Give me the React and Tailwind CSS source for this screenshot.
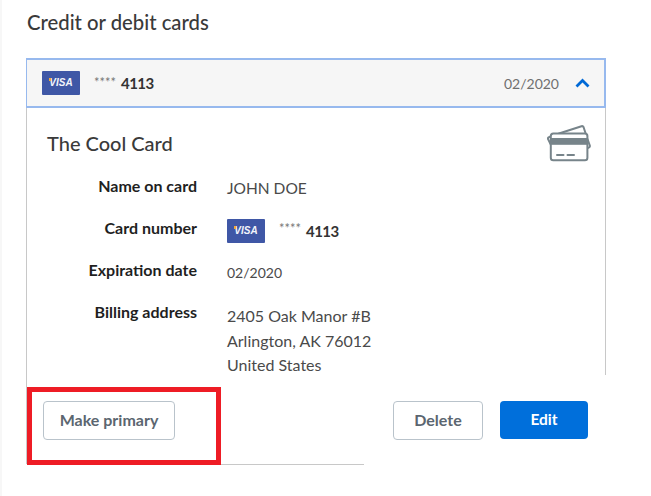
import React from 'react'

const font = { fontFamily: 'Lato, "Noto Sans", sans-serif' }

function VisaBadge() {
    return (
        <div className="w-[38px] h-[24px] shrink-0 rounded-[1px] bg-[#3f57a6] flex items-center justify-center">
            <span className="relative text-[10px] leading-none font-bold italic text-[#f2f4fa] font-['Liberation_Sans',sans-serif]">
                VISA
                <span className="absolute left-0 top-0 w-[2px] h-[3px] bg-[#f0a93a]" />
            </span>
        </div>
    )
}

function CardsIcon() {
    return (
        <svg width="44" height="37" viewBox="0 0 44 37" fill="none" stroke="#77848a" strokeWidth="2" strokeLinejoin="round" strokeLinecap="round">
            <path d="M12 8.5 L34.5 1.2 Q36 0.8 36.6 2.2 L38.5 8" />
            <path d="M4.5 11 L1.6 12.4 Q0.6 13 1.2 14.4 L4 20" />
            <path d="M40.5 14 L42.8 20.5 Q43.2 22 41.8 22.6 L40.5 23.2" />
            <rect x="3.8" y="8.6" width="36.6" height="26.6" rx="2.5" fill="#fff" />
            <rect x="3.8" y="13" width="36.6" height="6.8" fill="#77848a" stroke="none" />
            <path d="M10 30 H16.5 M20.5 30 H27" />
        </svg>
    )
}

function Row({ label, children, className }) {
    return (
        <div className={`flex ${className}`}>
            <div className="w-[170px] shrink-0 text-right text-[16px] leading-[18px] font-bold text-[#1f1f1f]">{label}</div>
            <div className="ml-[30px] text-[15.5px] text-[#4a4a4a]">{children}</div>
        </div>
    )
}

export default function App() {
    return (
        <div className="w-[651px] h-[496px] bg-white flex overflow-hidden relative" style={font}>
            <div className="w-[2px] bg-[#f7f7f7] shrink-0" />
            <div className="ml-[24px] w-[580px] flex flex-col">
                <h2 className="mt-[10px] h-[24px] ml-[1px] leading-[24px] text-[20.3px] font-medium text-[#3a3a3a]">Credit or debit cards</h2>

                <div className="mt-[24px] h-[50px] bg-[#f6f6f6] border-2 border-[#97b9ee] border-l-[1px] flex items-center pl-[15px] pr-[14px]">
                    <VisaBadge />
                    <div className="ml-[14px] flex items-baseline">
                        <span className="text-[13px] text-[#777] relative -top-[2px]">****</span>
                        <span className="ml-[5px] text-[15px] tracking-[-0.6px] font-bold text-[#333]">4113</span>
                    </div>
                    <span className="ml-auto text-[14px] text-[#6f6f6f]">02/2020</span>
                    <svg className="ml-[16px]" width="15" height="10" viewBox="0 0 15 10" fill="none" stroke="#0069d6" strokeWidth="2.8">
                        <path d="M1.5 8.5 L7.5 2.5 L13.5 8.5" />
                    </svg>
                </div>

                <div className="h-[267px] border-x border-[#c8c8c8] relative">
                    <h3 className="mt-[21px] ml-[20px] h-[28px] leading-[28px] text-[20px] font-medium text-[#3a3a3a]">The Cool Card</h3>
                    <div className="absolute right-[14px] top-[17px]">
                        <CardsIcon />
                    </div>
                    <Row label="Name on card" className="mt-[20px] h-[42px]">
                        <span className="leading-[22px]">JOHN DOE</span>
                    </Row>
                    <Row label="Card number" className="h-[42px]">
                        <div className="flex items-center">
                            <VisaBadge />
                            <span className="ml-[14px] text-[13px] text-[#777] relative -top-[2px]">****</span>
                            <span className="ml-[5px] text-[15px] tracking-[-0.6px] font-bold text-[#333]">4113</span>
                        </div>
                    </Row>
                    <Row label="Expiration date" className="h-[42px]">
                        <span className="text-[14px] leading-[22px]">02/2020</span>
                    </Row>
                    <Row label="Billing address">
                        <div className="text-[16px] leading-[24.5px] mt-[1px]">
                            <div>2405 Oak Manor #B</div>
                            <div>Arlington, AK 76012</div>
                            <div>United States</div>
                        </div>
                    </Row>
                </div>

                <div className="h-[89px] border-l border-[#c8c8c8] relative flex items-start pt-[26px] pl-[16px] pr-[18px]">
                    <button className="w-[132px] h-[39px] pb-[2px] rounded-[4px] border border-[#b9c3cb] text-[16px] font-bold text-[#5b6670]">Make primary</button>
                    <button className="ml-auto w-[90px] h-[39px] pb-[2px] rounded-[4px] border border-[#b9c3cb] text-[16px] font-bold text-[#5b6670]">Delete</button>
                    <button className="ml-[17px] w-[88px] h-[38px] rounded-[4px] bg-[#006fdb] text-[15.5px] font-bold text-white">Edit</button>
                    <div className="absolute left-0 bottom-[-1px] w-[337px] h-px bg-[#c8c8c8]" />
                </div>
            </div>

            {/* annotation drawn over the screenshot */}
            <div className="absolute left-[27px] top-[387px] w-[194px] h-[78px] border-[5px] border-[#ee1c25]" />
        </div>
    )
}
